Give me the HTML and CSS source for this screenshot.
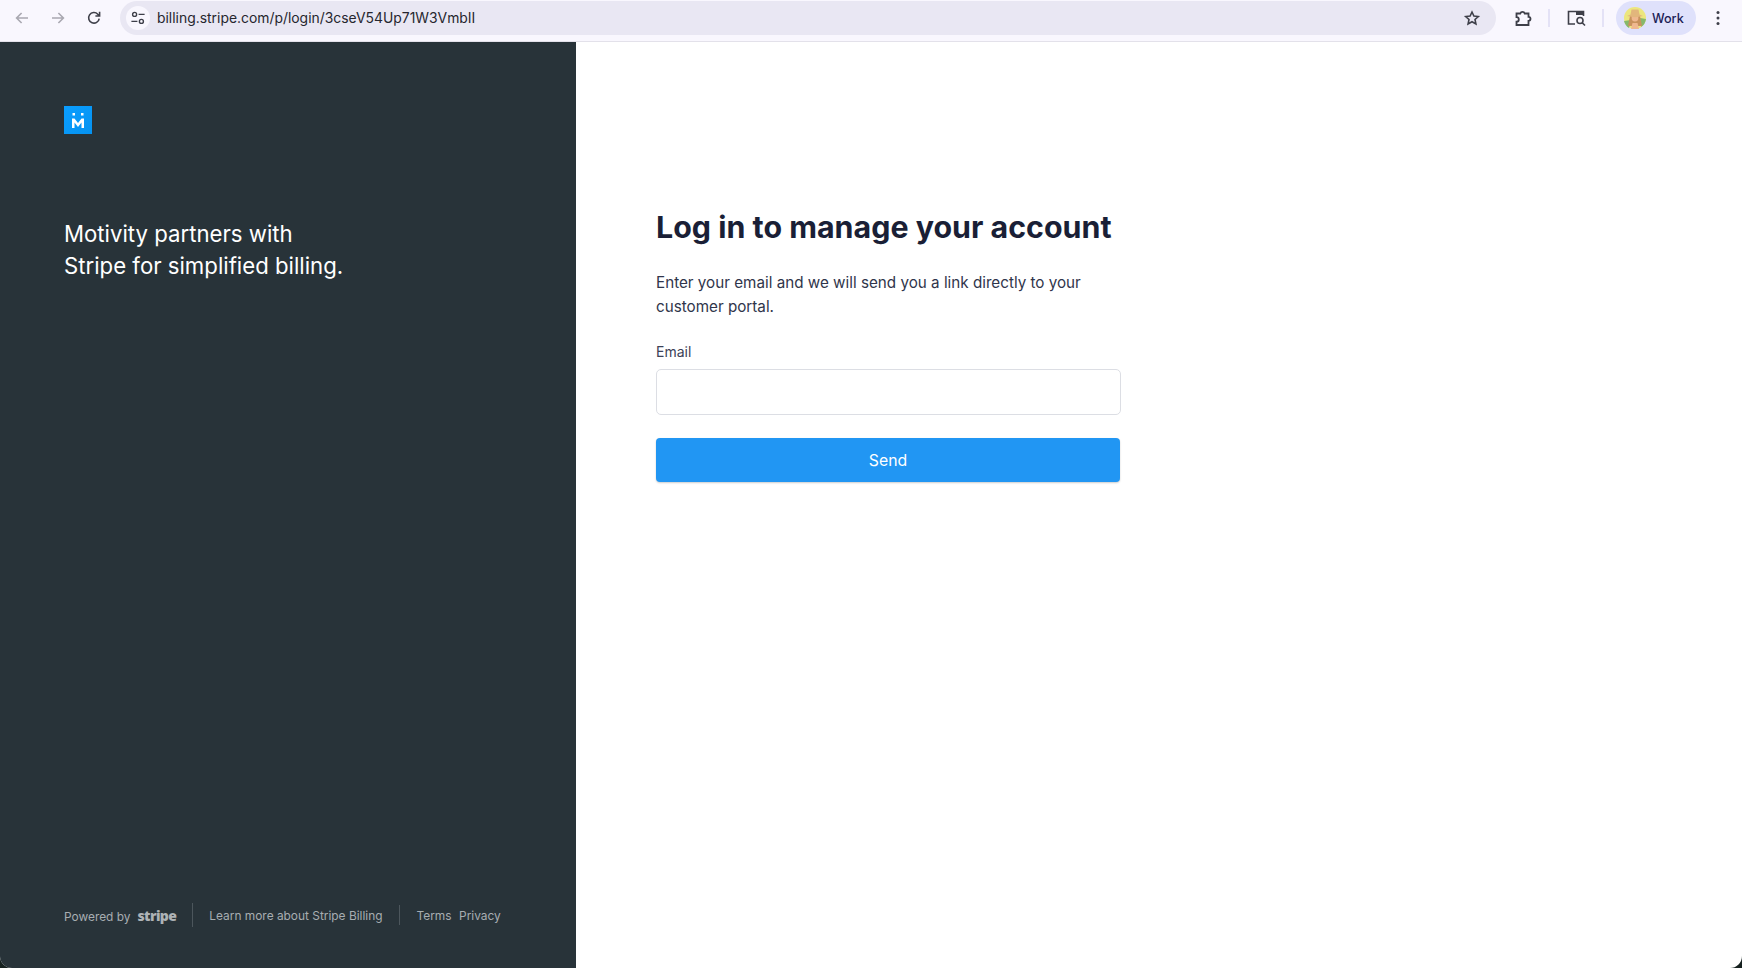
FILE: index.html
```html
<!DOCTYPE html>
<html lang="en">
<head>
<meta charset="utf-8">
<title>Log in to manage your account</title>
<link rel="stylesheet" href="styles.css">
</head>
<body>
<div class="window">
  <header class="toolbar">
    <button class="tool" aria-label="Back"><svg width="16" height="16" viewBox="0 0 16 16" class="muted"><path d="M14 8H3M7.6 3 2.6 8l5 5"/></svg></button>
    <button class="tool" aria-label="Forward"><svg width="16" height="16" viewBox="0 0 16 16" class="muted"><path d="M2 8h11M8.4 3l5 5-5 5"/></svg></button>
    <button class="tool" aria-label="Reload"><svg width="16" height="16" viewBox="0 0 16 16"><path d="M13.2 8.6A5.3 5.3 0 1 1 11.8 4.2L13.4 5.8M13.6 1.8v4.2H9.4"/></svg></button>
    <div class="omnibox">
      <span class="site-chip"><svg width="16" height="16" viewBox="0 0 16 16"><circle cx="4.6" cy="4.4" r="2"/><path d="M8.6 4.4h6M1.4 11.4h6"/><circle cx="11.4" cy="11.4" r="2"/></svg></span>
      <span class="url">billing.stripe.com/p/login/3cseV54Up71W3VmbII</span>
      <svg class="star" width="18" height="18" viewBox="0 0 18 18"><path d="m9 3 1.900 4 4.400.5-3.300 3 .9 4.400L9 12.700l-3.900 2.200.9-4.400-3.300-3 4.400-.5z"/></svg>
    </div>
    <button class="tool ext" aria-label="Extensions"><svg width="18" height="18" viewBox="0 0 18 18"><path d="M2.500 4.500h3.800a2.300 2.300 0 0 1 4.400 0h3.800v3.300a2 2 0 0 1 0 4v4.200h-12v-3.300a1.900 1.900 0 0 0 0-4.600z"/></svg></button>
    <span class="sep"></span>
    <button class="tool lens" aria-label="Search tab"><svg width="20" height="18" viewBox="0 0 20 18"><path d="M8 15H1.500V2.500h15V7"/><path class="solid" d="M9 2h8v4H9z"/><circle cx="13" cy="11.500" r="3"/><path d="m15.200 13.700 2.800 2.800"/></svg></button>
    <span class="sep"></span>
    <div class="profile">
      <svg class="avatar" width="22" height="22" viewBox="0 0 22 22">
        <circle class="av-bg" cx="11" cy="11" r="11"/>
        <path class="av-leaf" d="M0 14a11 11 0 0 0 5 7l2-8zM22 12a11 11 0 0 1-5 8l-1-9z"/>
        <path class="av-hair" d="M6 9h10l2 10H4z"/>
        <circle class="av-face" cx="11" cy="11" r="3.400"/>
        <path class="av-face" d="M7 22l1.500-6h5l1.500 6z"/>
        <path class="av-hat" d="M3 9c2-1 3-1 3.500-1.500L7.500 2.500h7l1 5c.5.500 1.500.500 3.500 1.500-5 1.500-11 1.500-16 0z"/>
      </svg>
      <span class="profile-name">Work</span>
    </div>
    <button class="tool menu" aria-label="Menu"><svg width="4" height="16" viewBox="0 0 4 16"><circle class="solid" cx="2" cy="2.500" r="1.500"/><circle class="solid" cx="2" cy="8" r="1.500"/><circle class="solid" cx="2" cy="13.500" r="1.500"/></svg></button>
  </header>

  <div class="page">
    <aside class="side">
      <div class="logo">
        <svg width="16" height="16" viewBox="0 0 16 16"><path class="logo-m" d="M2 16V6.500h2.500L8 11l3.500-4.500H14V16h-2.500V10.500L8 15 4.500 10.500V16z"/><rect class="logo-m" x="2.500" y="1" width="2.500" height="2.500"/><rect class="logo-m" x="11" y="1" width="2.500" height="2.500"/></svg>
      </div>
      <p class="tagline">Motivity partners with<br>Stripe for simplified billing.</p>
      <footer class="foot">
        <span class="powered">Powered by</span>
        <span class="stripe">stripe</span>
        <span class="rule tall"></span>
        <a class="foot-link">Learn more about Stripe Billing</a>
        <span class="rule"></span>
        <a class="foot-link">Terms</a>
        <a class="foot-link privacy">Privacy</a>
      </footer>
    </aside>

    <main class="main">
      <h1 class="title">Log in to manage your account</h1>
      <p class="lede">Enter your email and we will send you a link directly to your customer portal.</p>
      <label class="field-label" for="email">Email</label>
      <input class="field" id="email" type="email">
      <button class="send">Send</button>
    </main>
  </div>
</div>
</body>
</html>
```
FILE: styles.css
```css
* { box-sizing: border-box; }
html, body { margin: 0; height: 100%; }
body { background: #16211f; overflow: hidden; font-family: Inter, "Liberation Sans", sans-serif; }
.window { height: 968px; display: flex; flex-direction: column; border-radius: 0 0 12px 12px; overflow: hidden; background: #fff; }

.toolbar { flex: none; height: 42px; padding: 0 8px 6px 6px; display: flex; align-items: center; background: #f9f7fe; border-bottom: 1px solid #e3e1ea; }
.tool { flex: none; width: 32px; height: 32px; margin-right: 4px; padding: 0; border: 0; background: none; display: flex; align-items: center; justify-content: center; }
.toolbar svg { fill: none; stroke: #3e3f49; stroke-width: 1.6; }
.toolbar svg.muted { stroke: #a9a8b1; }
.toolbar svg .solid { fill: #3e3f49; stroke: none; }

.omnibox { flex: 1; height: 34px; margin: 0 0 0 6px; padding: 0 0 0 6px; display: flex; align-items: center; border-radius: 17px; background: #e9e7f3; }
.site-chip { flex: none; width: 24px; height: 24px; border-radius: 50%; background: #f9f7fe; display: flex; align-items: center; justify-content: center; }
.toolbar .site-chip svg { stroke-width: 1.400; }
.url { flex: 1; margin-left: 7px; font-size: 13.9px; color: #26262e; white-space: nowrap; }
.star { flex: none; margin-right: 15px; }

.ext { margin: 0 0 0 11px; }
.toolbar .ext svg { stroke-width: 1.800; }
.sep { flex: none; width: 2px; height: 18px; background: #e4e2f6; }
.ext + .sep { margin-left: 9px; }
.lens { margin: 0 0 0 10.600px; }
.lens + .sep { margin-left: 9.400px; }

.profile { flex: none; width: 80px; height: 34px; margin-left: 12px; padding-left: 8px; display: flex; align-items: center; border-radius: 17px; background: #dfe1fb; }
.toolbar .avatar { stroke: none; flex: none; }
.av-bg { fill: #ece67e; }
.av-leaf { fill: #86b86c; }
.av-hair { fill: #c8925c; }
.av-face { fill: #efb88f; }
.av-hat { fill: #e2b67c; }
.profile-name { margin: 1px 0 0 6px; font-size: 12.600px; font-weight: 500; color: #1b2055; }
.menu { margin: 0 0 0 6px; }

.page { flex: 1; min-height: 0; display: flex; }

.side { flex: none; width: 576px; padding: 64px 0 0 64px; display: flex; flex-direction: column; background: #283339; }
.logo { width: 28px; height: 28px; display: flex; align-items: center; justify-content: center; background: linear-gradient(135deg, #0a9eff, #0592f0); }
.logo-m { fill: #fff; }
.tagline { margin: 84px 0 0; font-size: 22.200px; line-height: 32px; color: #fff; }
.foot { margin-top: auto; height: 24px; margin-bottom: 41px; display: flex; align-items: center; font-size: 11.900px; color: #a7adb1; }
.powered { position: relative; top: 1px; }
.stripe { margin-left: 7px; font-family: "Open Sans", sans-serif; font-size: 14px; font-weight: 800; letter-spacing: -.6px; color: #aeb3b6; }
.rule { flex: none; width: 1px; height: 20px; margin: 0 17px 0 16px; background: #4c565c; }
.rule.tall { height: 24px; margin: 0 16px; }
.privacy { margin-left: 7.500px; }

.main { flex: 1; padding: 165px 0 0 80px; }
.title { width: 470px; margin: 0; font-size: 30.400px; line-height: 40px; font-weight: 700; color: #1a1f36; white-space: nowrap; }
.lede { width: 465px; margin: 24px 0 0; font-size: 15.230px; line-height: 24px; color: #30354b; }
.field-label { display: block; margin-top: 23px; font-size: 14px; line-height: 20px; font-weight: 400; color: #3c4257; }
.field { display: block; width: 465px; height: 46px; margin-top: 7px; padding: 0 12px; border: 1px solid #dcdee4; border-radius: 5px; background: #fff; outline: none; }
.send { display: block; width: 464px; height: 44px; margin-top: 23px; border: 0; border-radius: 4px; background: #2196f3; box-shadow: 0 1px 2px rgba(0,0,0,.2); font: 400 15.800px Inter, sans-serif; color: #fff; }
```
